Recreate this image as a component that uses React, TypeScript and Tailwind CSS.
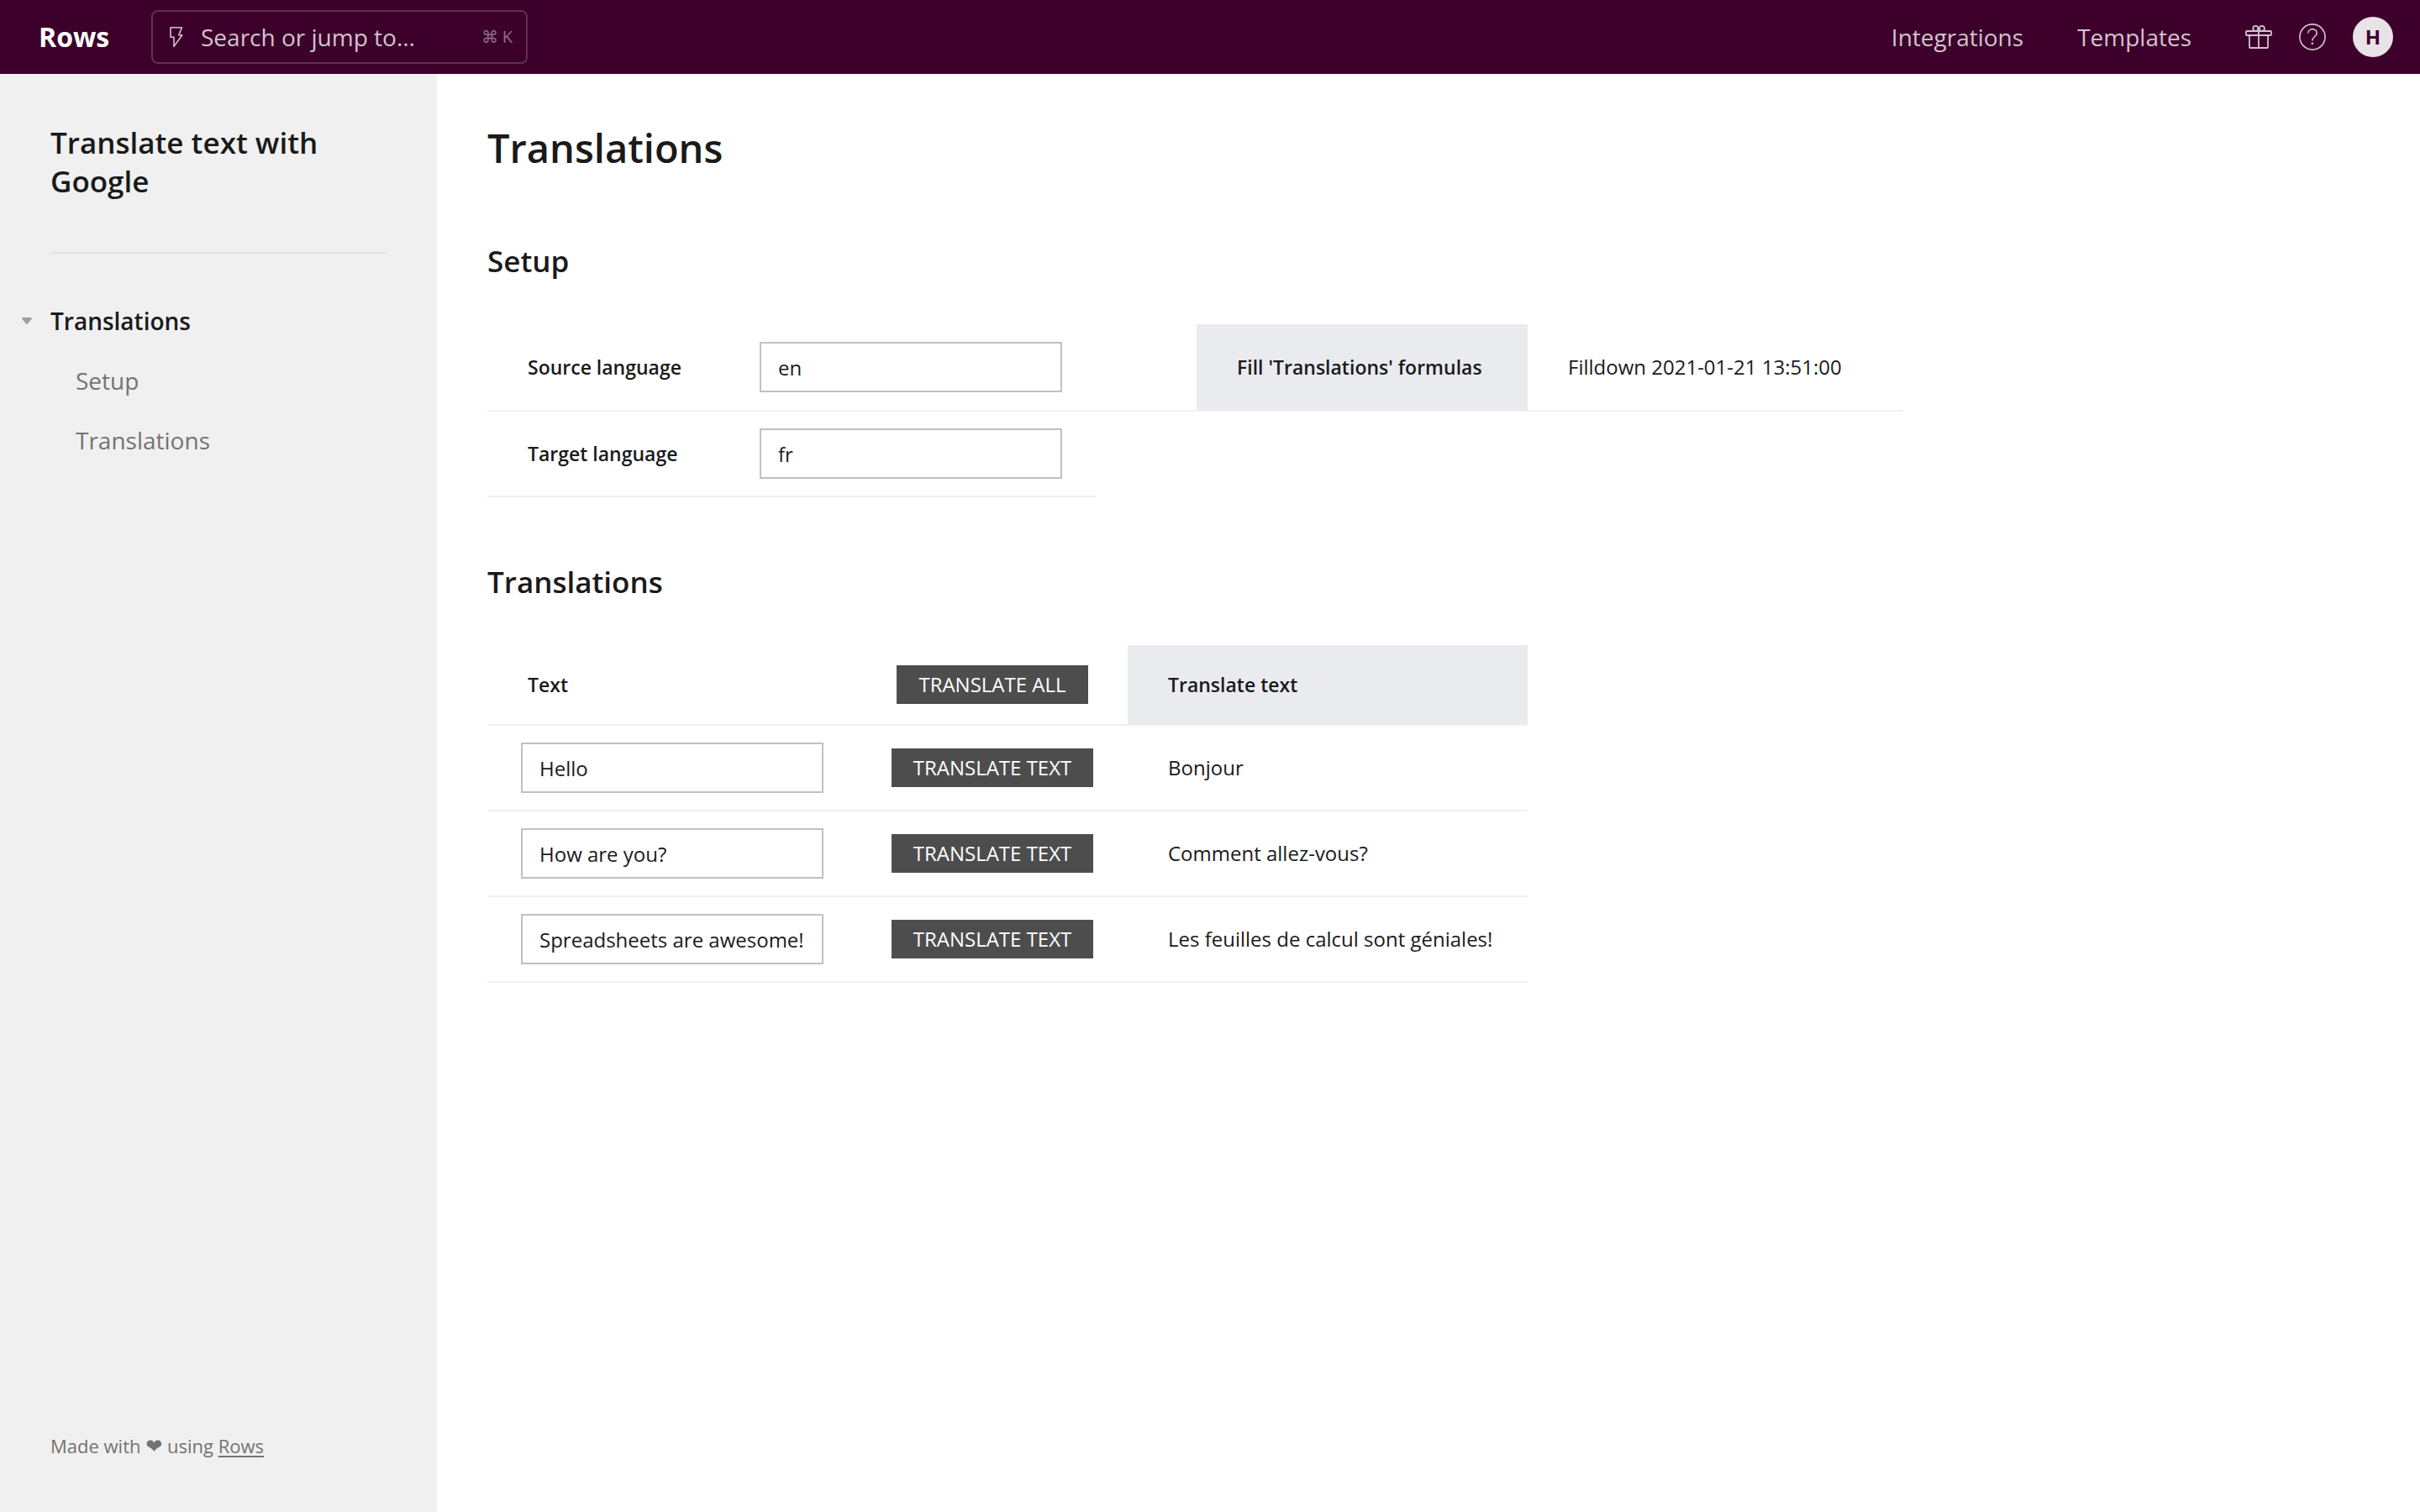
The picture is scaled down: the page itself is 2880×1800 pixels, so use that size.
import type { ReactNode } from "react";

const rows = [
  { text: "Hello", result: "Bonjour" },
  { text: "How are you?", result: "Comment allez-vous?" },
  { text: "Spreadsheets are awesome!", result: "Les feuilles de calcul sont géniales!" },
];

const cell = "border-b-2 border-[#f0f0f0] p-0 whitespace-nowrap";
const headCell = "border-b-2 border-[#f0f0f0] p-0 pl-12 text-left text-[23px] font-semibold whitespace-nowrap";

function BoltIcon() {
  return (
    <svg width="20" height="28" viewBox="0 0 20 28" fill="none" stroke="currentColor" strokeWidth="1.6" strokeLinejoin="round" className="shrink-0">
      <path d="M3 2.8h13.4l-3.6 9h4L7 25.4V14.2H3z" />
    </svg>
  );
}

function GiftIcon() {
  return (
    <svg width="32" height="32" viewBox="0 0 32 32" fill="none" stroke="currentColor" strokeWidth="1.8" strokeLinejoin="round">
      <rect x="1" y="9" width="30" height="5" rx="1" />
      <path d="M5 14v14a1 1 0 0 0 1 1h20a1 1 0 0 0 1-1V14M16 9v20" />
      <circle cx="12.3" cy="5.9" r="3" />
      <circle cx="19.9" cy="5.9" r="3" />
    </svg>
  );
}

function HelpIcon() {
  return (
    <svg width="32" height="32" viewBox="0 0 32 32" fill="none" stroke="currentColor" strokeWidth="1.6">
      <circle cx="16" cy="16" r="15.1" />
      <path d="M10.8 11.6c0-3 2.3-5 5.2-5s5.2 2 5.2 4.8c0 4.3-5.4 4-5.4 9.2" />
      <path d="M15.8 22.6v2.2" strokeWidth="2.4" />
    </svg>
  );
}

function TextField({ label, value }: { label: string; value: string }) {
  return (
    <input
      type="text"
      aria-label={label}
      defaultValue={value}
      className="mx-10 block h-15 w-[360px] border-2 border-[#c0c0c0] bg-white px-5 text-2xl text-[#1a1a1a] outline-none"
    />
  );
}

function ActionButton({ children }: { children: ReactNode }) {
  return (
    <button type="button" className="block h-[46px] bg-[#4d4d4d] px-[26px] text-2xl leading-[44px] text-white">
      {children}
    </button>
  );
}

function Header() {
  return (
    <header className="flex h-22 items-center bg-[#3c002b] pr-8 pl-[46px] text-[28px] text-[#d3c3cf]">
      <a href="#" className="w-[134px] text-[32px] font-bold text-white">Rows</a>
      <label className="flex h-16 w-[448px] items-center rounded-lg border-2 border-[#5e3352] pr-4 pl-[18px]">
        <BoltIcon />
        <input
          type="text"
          aria-label="Search"
          placeholder="Search or jump to..."
          className="ml-[19px] min-w-0 flex-1 bg-transparent outline-none placeholder:text-[#d3c3cf]"
        />
        <span className="text-xl text-[#8f6f86]">⌘ K</span>
      </label>
      <nav className="ml-auto flex items-center">
        <a href="#" className="mr-16">Integrations</a>
        <a href="#" className="mr-16">Templates</a>
        <button type="button" aria-label="What's new" className="mr-8"><GiftIcon /></button>
        <button type="button" aria-label="Help" className="mr-8"><HelpIcon /></button>
        <button type="button" aria-label="Account" className="size-12 rounded-full bg-[#e9e2e7] text-2xl font-bold text-[#3c002b]">H</button>
      </nav>
    </header>
  );
}

function Sidebar() {
  return (
    <aside className="flex w-[520px] shrink-0 flex-col bg-[#f0f0f0] px-15 pt-[59px] pb-[62px]">
      <h2 className="text-[35px] leading-[46px] font-semibold">Translate text with Google</h2>
      <hr className="mt-[61px] border-t-2 border-[#e0e0e0]" />
      <nav className="mt-15 flex flex-col gap-[31px] text-[28px] leading-10 text-[#737373]">
        <div className="-ml-[34px] flex items-center gap-[22px]">
          <button type="button" aria-label="Collapse">
            <svg width="12" height="8" viewBox="0 0 12 8" fill="#9e9e9e">
              <path d="M1 0h10q1.4.6.6 1.8L7 7.4q-1 .9-2 0L.4 1.8Q-.4.6 1 0z" />
            </svg>
          </button>
          <a href="#" className="font-semibold text-[#1a1a1a]">Translations</a>
        </div>
        <a href="#setup" className="ml-[30px]">Setup</a>
        <a href="#translations" className="ml-[30px]">Translations</a>
      </nav>
      <p className="mt-auto text-[22px] leading-8 text-[#737373]">
        Made with <span className="font-['DejaVu_Sans'] text-2xl leading-8">{"\u2764\uFE0E"}</span> using{" "}
        <a href="#" className="underline decoration-2 underline-offset-3">Rows</a>
      </p>
    </aside>
  );
}

function SetupTable() {
  return (
    <table className="mt-[51px] table-fixed border-separate border-spacing-0 text-2xl">
      <colgroup>
        <col className="w-[284px]" />
        <col className="w-[440px]" />
        <col className="w-[120px]" />
        <col className="w-[394px]" />
        <col className="w-[446px]" />
      </colgroup>
      <tbody>
        <tr className="h-[104px]">
          <th className={headCell}>Source language</th>
          <td className={cell}><TextField label="Source language" value="en" /></td>
          <td className={cell} />
          <th className={`${headCell} bg-[#eaebef] bg-clip-padding`}>Fill 'Translations' formulas</th>
          <td className={`${cell} pl-12`}>Filldown 2021-01-21 13:51:00</td>
        </tr>
        <tr className="h-[102px]">
          <th className={headCell}>Target language</th>
          <td className={cell}><TextField label="Target language" value="fr" /></td>
          <td colSpan={3} />
        </tr>
      </tbody>
    </table>
  );
}

function TranslationsTable() {
  return (
    <table className="mt-[51px] table-fixed border-separate border-spacing-0 text-2xl">
      <colgroup>
        <col className="w-[440px]" />
        <col className="w-[322px]" />
        <col className="w-[476px]" />
      </colgroup>
      <thead>
        <tr className="h-24">
          <th className={headCell}>Text</th>
          <td className={cell}>
            <div className="flex justify-center"><ActionButton>TRANSLATE ALL</ActionButton></div>
          </td>
          <th className={`${headCell} bg-[#eaebef] bg-clip-padding`}>Translate text</th>
        </tr>
      </thead>
      <tbody>
        {rows.map((row) => (
          <tr key={row.text} className="h-[102px]">
            <td className={cell}><TextField label="Text" value={row.text} /></td>
            <td className={cell}>
              <div className="flex justify-center"><ActionButton>TRANSLATE TEXT</ActionButton></div>
            </td>
            <td className={`${cell} pl-12`}>{row.result}</td>
          </tr>
        ))}
      </tbody>
    </table>
  );
}

export default function App() {
  return (
    <div className="flex min-h-screen flex-col bg-white font-['Open_Sans',sans-serif] text-[#1a1a1a]">
      <Header />
      <div className="flex flex-1">
        <Sidebar />
        <main className="min-w-0 flex-1 px-15 pt-[55px]">
          <h1 className="text-[47px] leading-[66px] font-semibold">Translations</h1>
          <section id="setup" className="mt-[78px]">
            <h2 className="text-[35px] leading-12 font-semibold">Setup</h2>
            <SetupTable />
          </section>
          <section id="translations" className="mt-[77px]">
            <h2 className="text-[35px] leading-12 font-semibold">Translations</h2>
            <TranslationsTable />
          </section>
        </main>
      </div>
    </div>
  );
}
